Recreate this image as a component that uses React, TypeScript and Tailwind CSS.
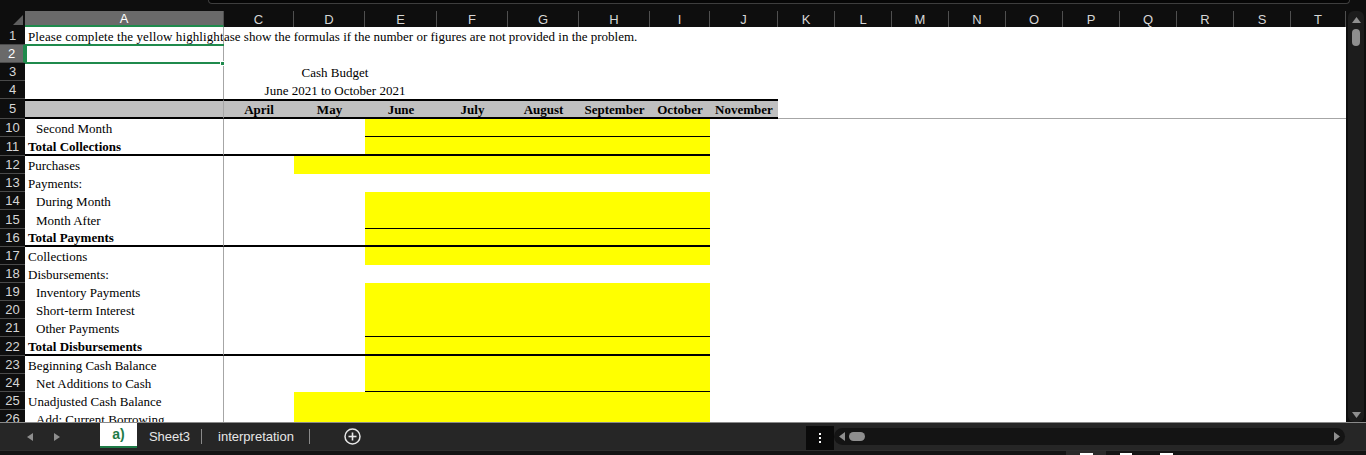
import React from 'react';

type Col = { k: string; w: string };
const COLS: Col[] = [
  { k: 'A', w: 'w-[199px]' },
  { k: 'C', w: 'w-[70px]' },
  { k: 'D', w: 'w-[71px]' },
  { k: 'E', w: 'w-[72px]' },
  { k: 'F', w: 'w-[71px]' },
  { k: 'G', w: 'w-[71px]' },
  { k: 'H', w: 'w-[71px]' },
  { k: 'I', w: 'w-[60px]' },
  { k: 'J', w: 'w-[68px]' },
  { k: 'K', w: 'w-[57px]' },
  { k: 'L', w: 'w-[57px]' },
  { k: 'M', w: 'w-[57px]' },
  { k: 'N', w: 'w-[57px]' },
  { k: 'O', w: 'w-[57px]' },
  { k: 'P', w: 'w-[57px]' },
  { k: 'Q', w: 'w-[57px]' },
  { k: 'R', w: 'w-[57px]' },
  { k: 'S', w: 'w-[57px]' },
  { k: 'T', w: 'w-[55px]' },
];

const MONTHS: Record<string, string> = {
  C: 'April',
  D: 'May',
  E: 'June',
  F: 'July',
  G: 'August',
  H: 'September',
  I: 'October',
  J: 'November',
};

type Row = {
  n: string;
  h: string;
  label: string;
  indent?: boolean;
  bold?: boolean;
  y?: 'D' | 'E';
  thin?: boolean;
  thick?: boolean;
};

const ROWS: Row[] = [
  { n: '10', h: 'h-[18px]', label: 'Second Month', indent: true, y: 'E', thin: true },
  { n: '11', h: 'h-[19px]', label: 'Total Collections', bold: true, y: 'E', thick: true },
  { n: '12', h: 'h-[18px]', label: 'Purchases', y: 'D' },
  { n: '13', h: 'h-[18px]', label: 'Payments:' },
  { n: '14', h: 'h-[18px]', label: 'During Month', indent: true, y: 'E' },
  { n: '15', h: 'h-[19px]', label: 'Month After', indent: true, y: 'E', thin: true },
  { n: '16', h: 'h-[18px]', label: 'Total Payments', bold: true, y: 'E', thick: true },
  { n: '17', h: 'h-[18px]', label: 'Collections', y: 'E' },
  { n: '18', h: 'h-[18px]', label: 'Disbursements:' },
  { n: '19', h: 'h-[18px]', label: 'Inventory Payments', indent: true, y: 'E' },
  { n: '20', h: 'h-[18px]', label: 'Short-term Interest', indent: true, y: 'E' },
  { n: '21', h: 'h-[18px]', label: 'Other Payments', indent: true, y: 'E', thin: true },
  { n: '22', h: 'h-[19px]', label: 'Total Disbursements', bold: true, y: 'E', thick: true },
  { n: '23', h: 'h-[18px]', label: 'Beginning Cash Balance', y: 'E' },
  { n: '24', h: 'h-[18px]', label: 'Net Additions to Cash', indent: true, y: 'E', thin: true },
  { n: '25', h: 'h-[18px]', label: 'Unadjusted Cash Balance', y: 'D' },
  { n: '26', h: 'h-[18px]', label: 'Add: Current Borrowing', indent: true, y: 'D' },
];

const DATA_COLS = ['C', 'D', 'E', 'F', 'G', 'H', 'I'];
const FROM_D = ['D', 'E', 'F', 'G', 'H', 'I'];
const FROM_E = ['E', 'F', 'G', 'H', 'I'];

function RowHead({ n, sel }: { n: string; sel?: boolean }) {
  return (
    <div
      className={`w-[25px] shrink-0 h-full flex items-center justify-center pt-[1px] border-b border-[#4a4a4a] text-[13px] font-['Liberation_Sans',sans-serif] ${
        sel ? 'bg-[#6a6a6a] text-white border-r-2 border-r-[#1f8a4c]' : 'bg-[#0e0e0e] text-[#d6d6d6]'
      }`}
    >
      {n}
    </div>
  );
}

function BodyRow({ r }: { r: Row }) {
  return (
    <div className={`flex ${r.h} shrink-0`}>
      <RowHead n={r.n} />
      <div
        className={`w-[199px] shrink-0 h-full flex items-center pt-[2px] whitespace-nowrap overflow-hidden border-r border-r-[#a6a6a6] ${
          r.thick ? 'border-b-2 border-b-black' : ''
        } ${r.indent ? 'pl-[11px]' : 'pl-[3px]'} ${r.bold ? 'font-bold' : ''}`}
      >
        {r.label}
      </div>
      {COLS.filter((c) => DATA_COLS.includes(c.k)).map((c) => {
        const yellow =
          r.y === 'D' ? FROM_D.includes(c.k) : r.y === 'E' ? FROM_E.includes(c.k) : false;
        const border = r.thick
          ? 'border-b-2 border-b-black'
          : r.thin && FROM_E.includes(c.k)
          ? 'border-b border-b-black'
          : '';
        return (
          <div
            key={c.k}
            className={`${c.w} shrink-0 h-full ${yellow ? 'bg-[#ffff00]' : ''} ${border}`}
          />
        );
      })}
      <div className="flex-1" />
    </div>
  );
}

function Grid() {
  return (
    <div className="relative w-[1346px] h-[411px] flex flex-col overflow-hidden bg-white text-[13px] text-black font-['Liberation_Serif',serif]">
      {/* column headers */}
      <div className="flex h-[16px] shrink-0 bg-[#0e0e0e]">
        <div className="w-[25px] shrink-0 h-full flex items-end justify-end pr-[2px] pb-[2px]">
          <svg width="10" height="10" viewBox="0 0 10 10">
            <polygon points="10,0 10,10 0,10" fill="#5e5e5e" />
          </svg>
        </div>
        {COLS.map((c) => (
          <div
            key={c.k}
            className={`${c.w} shrink-0 h-full flex items-center justify-center pt-[1px] text-[13px] font-['Liberation_Sans',sans-serif] border-r border-r-[#4f4f4f] ${
              c.k === 'A'
                ? 'bg-[#6a6a6a] text-white border-b-2 border-b-[#1f8a4c]'
                : 'text-[#d6d6d6]'
            }`}
          >
            {c.k}
          </div>
        ))}
      </div>

      {/* row 1 */}
      <div className="flex h-[18px] shrink-0">
        <RowHead n="1" />
        <div className="w-[199px] shrink-0 h-full flex items-center pt-[2px] pl-[3px] tracking-[0.1px] whitespace-nowrap overflow-hidden border-r border-r-[#a6a6a6]">
          Please complete the yellow highlight
        </div>
        <div className="flex-1 h-full flex items-center pt-[2px] whitespace-nowrap">
          ase show the formulas if the number or figures are not provided in the problem.
        </div>
      </div>
      {/* row 2 */}
      <div className="flex h-[18px] shrink-0">
        <RowHead n="2" sel />
        <div className="w-[199px] shrink-0 h-full border-r border-r-[#a6a6a6]" />
        <div className="flex-1" />
      </div>
      {/* row 3 */}
      <div className="flex h-[18px] shrink-0">
        <RowHead n="3" />
        <div className="w-[199px] shrink-0 h-full border-r border-r-[#a6a6a6]" />
        <div className="w-[222px] shrink-0 h-full flex items-center justify-center pt-[2px] whitespace-nowrap">
          Cash Budget
        </div>
        <div className="flex-1" />
      </div>
      {/* row 4 */}
      <div className="flex h-[18px] shrink-0">
        <RowHead n="4" />
        <div className="w-[199px] shrink-0 h-full border-r border-r-[#a6a6a6]" />
        <div className="w-[222px] shrink-0 h-full flex items-center justify-center pt-[2px] whitespace-nowrap">
          June 2021 to October 2021
        </div>
        <div className="flex-1" />
      </div>
      {/* row 5 */}
      <div className="flex h-[20px] shrink-0">
        <RowHead n="5" />
        {COLS.map((c) => {
          const inHead = c.k in MONTHS || c.k === 'A';
          return (
            <div
              key={c.k}
              className={`${c.w} shrink-0 h-full flex items-center justify-center pt-[2px] font-bold whitespace-nowrap ${
                inHead
                  ? 'bg-[#c0c0c0] border-t-2 border-t-black border-b-2 border-b-black'
                  : 'border-b border-b-[#a6a6a6]'
              } ${c.k === 'A' ? 'border-r border-r-[#a6a6a6]' : ''}`}
            >
              {MONTHS[c.k] ?? ''}
            </div>
          );
        })}
      </div>

      {ROWS.map((r) => (
        <BodyRow key={r.n} r={r} />
      ))}

      {/* selection box A2 */}
      <div className="absolute left-[25px] top-[33px] w-[199px] h-[20px] border-t-2 border-b-2 border-l-2 border-[#1f8a4c]" />
      <div className="absolute left-[220px] top-[50px] w-[5px] h-[5px] bg-[#1f8a4c] border border-white" />
    </div>
  );
}

function VScroll() {
  return (
    <div className="w-[20px] h-[411px] shrink-0 bg-[#0e0e0e] flex justify-center">
      <div className="w-[16px] h-full rounded-[6px] bg-[#1c1c1c] flex flex-col items-center pt-[6px] pb-[4px]">
        <svg width="9" height="6" viewBox="0 0 9 6">
          <polygon points="4.5,0 9,6 0,6" fill="#8e8e8e" />
        </svg>
        <div className="mt-[6px] w-[8px] h-[17px] rounded-full bg-[#8e8e8e]" />
        <div className="flex-1" />
        <svg width="9" height="6" viewBox="0 0 9 6">
          <polygon points="0,0 9,0 4.5,6" fill="#8e8e8e" />
        </svg>
      </div>
    </div>
  );
}

function BottomBar() {
  return (
    <div className="h-[28px] shrink-0 bg-[#262626] border-t border-t-[#8a8a8a] flex items-stretch font-['Liberation_Sans',sans-serif] text-[13px]">
      <div className="w-[100px] shrink-0 flex items-center pl-[27px] gap-[21px]">
        <svg width="6" height="8" viewBox="0 0 6 8">
          <polygon points="6,0 6,8 0,4" fill="#8e8e8e" />
        </svg>
        <svg width="6" height="8" viewBox="0 0 6 8">
          <polygon points="0,0 0,8 6,4" fill="#8e8e8e" />
        </svg>
      </div>
      <div className="w-[37px] shrink-0 flex flex-col">
        <div className="flex-1 bg-white flex items-center justify-center font-bold text-[14px] text-[#1e7b47]">
          a)
        </div>
        <div className="h-[2px] bg-[#1e7b47]" />
        <div className="h-[2px]" />
      </div>
      <div className="w-[65px] shrink-0 flex items-center justify-center text-[#e6e6e6] relative">
        Sheet3
        <div className="absolute right-0 top-[6px] bottom-[6px] w-px bg-[#8a8a8a]" />
      </div>
      <div className="w-[108px] shrink-0 flex items-center justify-center text-[#e6e6e6] relative">
        interpretation
        <div className="absolute right-0 top-[6px] bottom-[6px] w-px bg-[#8a8a8a]" />
      </div>
      <div className="w-[84px] shrink-0 flex items-center justify-center">
        <svg width="17" height="17" viewBox="0 0 17 17">
          <circle cx="8.5" cy="8.5" r="7.5" fill="none" stroke="#e6e6e6" strokeWidth="1.5" />
          <line x1="8.5" y1="4.5" x2="8.5" y2="12.5" stroke="#e6e6e6" strokeWidth="1.6" />
          <line x1="4.5" y1="8.5" x2="12.5" y2="8.5" stroke="#e6e6e6" strokeWidth="1.6" />
        </svg>
      </div>
      <div className="w-[412px] shrink-0" />
      <div className="w-[28px] shrink-0 bg-[#0a0a0a] flex flex-col items-center justify-center gap-[2px] mt-[3px]">
        <div className="w-[2px] h-[2px] bg-white" />
        <div className="w-[2px] h-[2px] bg-white" />
        <div className="w-[2px] h-[2px] bg-white" />
      </div>
      <div className="w-[511px] shrink-0 flex items-center">
        <div className="w-full h-[17px] rounded-full bg-[#141414] flex items-center px-[5px]">
          <svg width="6" height="9" viewBox="0 0 6 9">
            <polygon points="6,0 6,9 0,4.5" fill="#8e8e8e" />
          </svg>
          <div className="ml-[4px] w-[16px] h-[9px] rounded-full bg-[#8e8e8e]" />
          <div className="flex-1" />
          <svg width="6" height="9" viewBox="0 0 6 9">
            <polygon points="0,0 0,9 6,4.5" fill="#8e8e8e" />
          </svg>
        </div>
      </div>
      <div className="flex-1" />
    </div>
  );
}

export default function App() {
  return (
    <div className="w-[1366px] h-[455px] overflow-hidden bg-[#0e0e0e] flex flex-col">
      {/* formula bar edge */}
      <div className="h-[11px] shrink-0 flex">
        <div className="w-[208px] shrink-0" />
        <div className="w-[1142px] h-[4px] shrink-0 bg-[#060606] border-b border-x border-[#3e3e3e] rounded-b-[5px]" />
      </div>
      <div className="flex h-[411px] shrink-0">
        <Grid />
        <VScroll />
      </div>
      <BottomBar />
      <div className="flex-1 bg-[#141414] border-t border-t-[#2e2e2e] flex">
        <div className="w-[1066px] shrink-0" />
        <div className="w-[40px] shrink-0 bg-[#2a2a2a] flex items-end justify-center">
          <div className="w-[13px] h-[2px] bg-white" />
        </div>
        <div className="w-[14px] shrink-0" />
        <div className="w-[12px] h-[2px] self-end bg-white shrink-0" />
        <div className="w-[28px] shrink-0" />
        <div className="w-[13px] h-[2px] self-end bg-white shrink-0" />
      </div>
    </div>
  );
}
